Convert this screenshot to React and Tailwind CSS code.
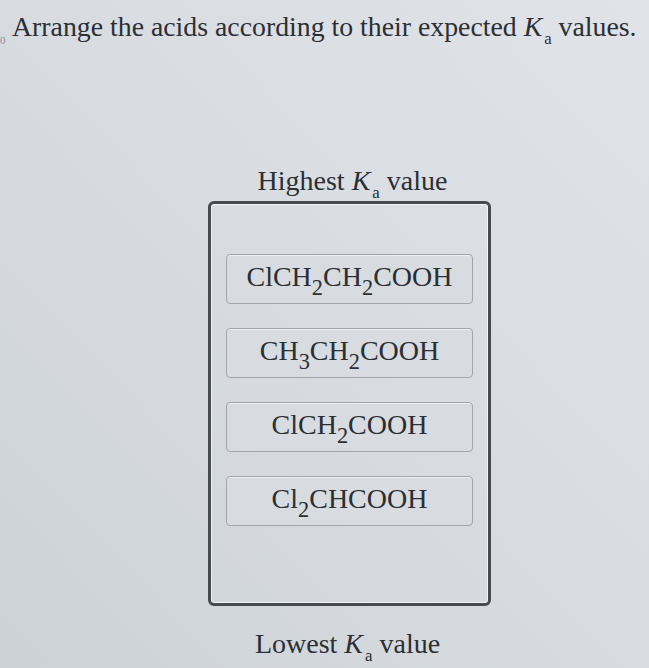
import React from "react";

const serif = { fontFamily: '"Liberation Serif", "Times New Roman", serif' };

function Ka() {
  return (
    <span>
      <i>K</i>
      <span className="text-[0.6em] leading-[0] align-[-0.45em] ml-[2px]">a</span>
    </span>
  );
}

function Sub({ children }) {
  return <span className="text-[0.8em] leading-[0] align-[-0.38em]">{children}</span>;
}

const acids = [
  ["ClCH", <Sub key="a">2</Sub>, "CH", <Sub key="b">2</Sub>, "COOH"],
  ["CH", <Sub key="a">3</Sub>, "CH", <Sub key="b">2</Sub>, "COOH"],
  ["ClCH", <Sub key="a">2</Sub>, "COOH"],
  ["Cl", <Sub key="a">2</Sub>, "CHCOOH"],
];

export default function App() {
  return (
    <div
      className="w-[649px] h-[668px] overflow-hidden relative flex flex-col bg-gradient-to-tr from-[#cdd2d7] via-[#d8dce1] to-[#e0e3e7] text-[#2b2f34]"
      style={serif}
    >
      <div className="pl-[12px] pt-[10px] text-[27.8px] leading-[34px] whitespace-nowrap">
        Arrange the acids according to their expected <Ka /> values.
      </div>
      <div className="absolute left-0 top-[32px] text-[11px] text-[#8a8f95]">0</div>

      <div className="ml-[208px] w-[283px] flex flex-col items-center">
        <div className="mt-[120px] text-[28px] leading-[34px] ml-[6px] whitespace-nowrap">
          Highest <Ka /> value
        </div>
        <div className="mt-[3px] w-[283px] h-[405px] rounded-[6px] border-[3px] border-[#464b51] shadow-[inset_0_0_0_1px_#f2f4f6] pt-[50px] px-[15px] flex flex-col gap-[24px]">
          {acids.map((a, i) => (
            <div
              key={i}
              className="h-[50px] rounded-[4px] border border-[#a1a6ac] bg-[#d8dce0] shadow-[inset_0_1px_0_#eceef1] flex items-center justify-center text-[28px] leading-none pb-[5px] whitespace-nowrap"
            >
              <span>{a}</span>
            </div>
          ))}
        </div>
        <div className="mt-[21px] text-[28px] leading-[34px] ml-[-4px] whitespace-nowrap">
          Lowest <Ka /> value
        </div>
      </div>
    </div>
  );
}
